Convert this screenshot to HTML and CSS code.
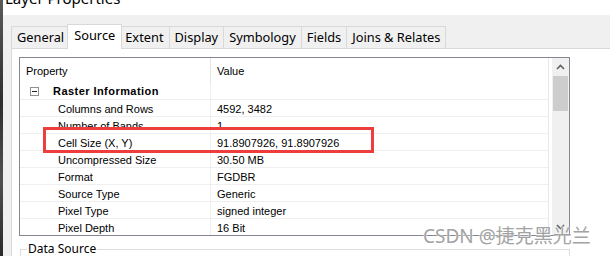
FILE: index.html
```html
<!DOCTYPE html>
<html>
<head>
<meta charset="utf-8">
<title>Layer Properties</title>
<link rel="stylesheet" href="styles.css">
</head>
<body>
<div class="screen">
  <div class="desk"></div>
  <div class="window">
    <div class="titlebar"><span class="title">Layer Properties</span></div>
    <div class="client">
      <div class="tabs">
        <div class="tab">General</div>
        <div class="tab sel">Source</div>
        <div class="tab">Extent</div>
        <div class="tab">Display</div>
        <div class="tab">Symbology</div>
        <div class="tab">Fields</div>
        <div class="tab">Joins &amp; Relates</div>
      </div>
      <div class="page">
        <div class="listview">
          <div class="lv-body">
            <div class="rows">
              <div class="row head">
                <div class="name">Property</div>
                <div class="val">Value</div>
              </div>
              <div class="row group-row">
                <div class="name"><span class="expander"></span><b>Raster Information</b></div>
                <div class="val"></div>
              </div>
              <div class="row"><div class="name child">Columns and Rows</div><div class="val">4592, 3482</div></div>
              <div class="row"><div class="name child"><span class="clip">Number of Bands</span></div><div class="val"><span class="clip">1</span></div></div>
              <div class="row"><div class="name child">Cell Size (X, Y)</div><div class="val">91.8907926, 91.8907926</div></div>
              <div class="row"><div class="name child">Uncompressed Size</div><div class="val">30.50 MB</div></div>
              <div class="row"><div class="name child">Format</div><div class="val">FGDBR</div></div>
              <div class="row"><div class="name child">Source Type</div><div class="val">Generic</div></div>
              <div class="row"><div class="name child">Pixel Type</div><div class="val">signed integer</div></div>
              <div class="row"><div class="name child">Pixel Depth</div><div class="val">16 Bit</div></div>
            </div>
          </div>
          <div class="scrollbar">
            <div class="sb-btn"><svg width="9" height="6" viewBox="0 0 9 6"><polyline points="1,5 4.5,1.5 8,5" fill="none" stroke="#606060" stroke-width="1.6"/></svg></div>
            <div class="sb-thumb"></div>
            <div class="sb-track"></div>
            <div class="sb-btn"><svg width="9" height="6" viewBox="0 0 9 6"><polyline points="1,1 4.5,4.5 8,1" fill="none" stroke="#606060" stroke-width="1.6"/></svg></div>
          </div>
        </div>
        <fieldset class="group">
          <legend>Data Source</legend>
        </fieldset>
      </div>
    </div>
  </div>
  <div class="highlight"></div>
  <div class="watermark">CSDN @捷克黑光兰</div>
</div>
</body>
</html>
```
FILE: styles.css
```css
html, body {
  margin: 0;
  padding: 0;
}
body {
  width: 610px;
  height: 256px;
  overflow: hidden;
  background: #f0f0f0;
}
.screen {
  position: relative;
  display: flex;
  width: 610px;
  height: 256px;
  overflow: hidden;
}
.desk {
  flex: none;
  width: 3px;
  background: linear-gradient(#5a5a5a, #2e2e2e 40%, #505050 70%, #2a2a2a);
}
.window {
  flex: 1;
  min-width: 0;
  display: flex;
  flex-direction: column;
  background: #f0f0f0;
}
.titlebar {
  flex: none;
  height: 15px;
  background: #fff;
  overflow: hidden;
}
.title {
  display: block;
  margin: -9px 0 0 2px;
  font: 15px/15px "Noto Sans", sans-serif;
  color: #000;
  white-space: nowrap;
}
.client {
  flex: 1;
  display: flex;
  flex-direction: column;
  padding: 9px 0 0 8px;
}
.tabs {
  display: flex;
  align-items: flex-end;
  height: 25px;
  margin-bottom: -1px;
  position: relative;
  z-index: 1;
}
.tab {
  position: relative;
  box-sizing: border-box;
  height: 22px;
  margin: 0 0 1px -1px;
  padding: 0 5px;
  border: 1px solid #d9d9d9;
  border-bottom: none;
  background: #f0f0f0;
  font: 12.8px/21px "Noto Sans", sans-serif;
  color: #000;
  white-space: nowrap;
}
.tab:first-child {
  margin-left: 0;
}
.tab.sel {
  z-index: 2;
  height: 25px;
  margin: 0 -2px 0 -3px;
  padding: 0 6px;
  background: #fff;
  line-height: 20px;
}
.page {
  flex: 1;
  margin-right: -20px;
  padding: 8px 0 0 7px;
  background: #fff;
  border-top: 1px solid #d9d9d9;
  border-left: 1px solid #d9d9d9;
}
.listview {
  display: flex;
  box-sizing: border-box;
  width: 551px;
  height: 179px;
  border: 1px solid #828790;
  background: #fff;
}
.lv-body {
  width: 532px;
  overflow: hidden;
}
.rows {
  width: 528px;
  height: 100%;
  border-right: 1px solid #e8e8e8;
  font: 11px "Liberation Sans", Arial, sans-serif;
  color: #000;
}
.row {
  display: grid;
  grid-template-columns: 191px 1fr;
  height: 17px;
  box-sizing: border-box;
  border-bottom: 1px solid #efefef;
}
.row .name {
  border-right: 1px solid #efefef;
  box-sizing: border-box;
  padding: 2px 0 0 0;
  line-height: 14px;
  white-space: nowrap;
  overflow: hidden;
}
.row .val {
  padding: 2px 0 0 6px;
  line-height: 14px;
  white-space: nowrap;
  overflow: hidden;
}
.row .child {
  padding-left: 38px;
}
.row.head {
  height: 24px;
  border-bottom: none;
}
.row.head .name {
  padding: 2px 0 0 6px;
  line-height: 22px;
  border-right-color: #e5e5e5;
}
.row.head .val {
  line-height: 22px;
}
.row.group-row {
  height: 18px;
}
.row.group-row .name {
  display: flex;
  align-items: center;
  padding: 2px 0 0 10px;
  line-height: 15px;
}
.row.group-row b {
  margin-left: 14px;
  font-weight: bold;
  letter-spacing: 0.45px;
}
.expander {
  position: relative;
  flex: none;
  box-sizing: border-box;
  width: 9px;
  height: 9px;
  border: 1px solid #919191;
  background: #fff;
}
.expander::after {
  content: "";
  position: absolute;
  left: 1px;
  top: 3px;
  width: 5px;
  height: 1px;
  background: #222;
}
.clip {
  display: block;
  height: 8px;
  overflow: hidden;
}
.scrollbar {
  flex: none;
  display: flex;
  flex-direction: column;
  width: 17px;
  margin-left: 3px;
  background: #f0f0f0;
}
.sb-btn {
  flex: none;
  height: 17px;
  display: flex;
  align-items: center;
  justify-content: center;
}
.sb-thumb {
  flex: none;
  height: 35px;
  margin: 1px 1px 0 1px;
  background: #cdcdcd;
}
.sb-track {
  flex: 1;
}
.group {
  box-sizing: border-box;
  width: 550px;
  height: 40px;
  margin: 6px 0 0 1px;
  padding: 0 0 0 6px;
  border: 1px solid #dcdcdc;
}
.group legend {
  padding: 0 1px;
  font: 12px/14px "Noto Sans", sans-serif;
  color: #000;
}
.highlight {
  position: absolute;
  left: 43px;
  top: 127px;
  width: 331px;
  height: 26px;
  box-sizing: border-box;
  border: 3px solid #ee3d3d;
}
.watermark {
  position: absolute;
  left: 423px;
  top: 224px;
  font: 19px/24px "Noto Sans", "Noto Sans CJK SC", sans-serif;
  color: #a3a3a3;
  white-space: nowrap;
  text-shadow: 0 0 1px #fff, 0 0 2px #fff;
}
```
